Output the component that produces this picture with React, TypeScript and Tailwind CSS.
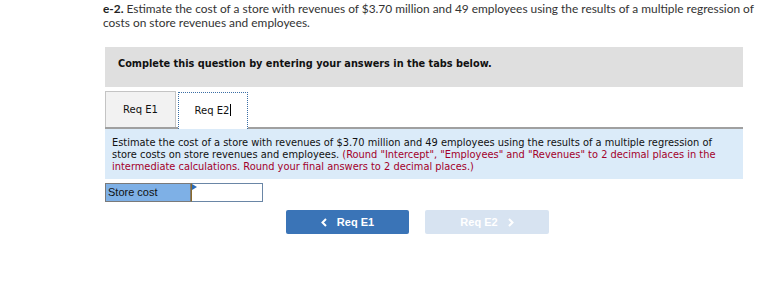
import React from 'react';

export default function App() {
  return (
    <div className="w-[758px] h-[282px] bg-white overflow-hidden relative">
      {/* Question text */}
      <div className="pl-[103px] pt-[2px] text-[11.9px] leading-[14px] text-[#333] font-['Lato',sans-serif] whitespace-nowrap">
        <b className="text-[#222]">e-2.</b> Estimate the cost of a store with revenues of $3.70 million and 49 employees using the results of a multiple regression of
        <br />
        costs on store revenues and employees.
      </div>

      <div className="ml-[105px] w-[638px] mt-[17px]">
        {/* Instructions banner */}
        <div className="h-[40px] bg-[#dfdfdf] flex items-center pl-[13px] pb-[5px] font-['DejaVu_Sans',sans-serif] text-[9.75px] font-bold text-[#111]">
          Complete this question by entering your answers in the tabs below.
        </div>

        {/* Tabs */}
        <div className="flex items-end gap-[2px] mt-[4px] font-['DejaVu_Sans',sans-serif] text-[10px] text-[#111]">
          <div className="w-[71px] h-[36px] bg-[#f2f2f2] border border-[#c4c4c4] border-b-0 flex items-center justify-center">
            Req E1
          </div>
          <div className="w-[70px] h-[37px] bg-white border border-dotted border-[#3a6ea5] border-b-0 flex items-center justify-center relative z-10 -mb-[2px] pb-[2px]">
            Req E2<span className="inline-block w-px h-[12px] bg-black ml-[1px]" />
          </div>
        </div>

        {/* Info box */}
        <div className="border-t-2 border-[#a0a0a0] bg-[#dbebf9] pl-[7px] pr-[6px] pt-[8px] pb-[8px] h-[52px] font-['DejaVu_Sans',sans-serif] text-[9.85px] leading-[12px] text-[#111]">
          Estimate the cost of a store with revenues of $3.70 million and 49 employees using the results of a multiple regression of store costs on store revenues and employees.{' '}
          <span className="text-[#a3002a]">
            (Round "Intercept", "Employees" and "Revenues" to 2 decimal places in the intermediate calculations. Round your final answers to 2 decimal places.)
          </span>
        </div>

        {/* Answer row */}
        <div className="flex mt-[4px] font-['Liberation_Sans',sans-serif] text-[11px]">
          <div className="w-[86px] h-[19px] bg-[#7eb0e6] border border-[#7a7a7a] flex items-center pl-[2px] text-[#111]">
            Store cost
          </div>
          <div className="w-[72px] h-[19px] bg-white border border-[#6a86a6] border-l-[#8a6a2a] relative">
            <span className="absolute left-0 top-0 w-0 h-0 border-t-[3px] border-b-[3px] border-l-[5px] border-t-transparent border-b-transparent border-l-[#2a6bb8]" />
          </div>
        </div>

        {/* Nav buttons */}
        <div className="flex gap-[16px] mt-[8px] ml-[181px] font-['Liberation_Sans',sans-serif] text-[11px] font-bold text-white">
          <div className="w-[123px] h-[24px] bg-[#3a74b7] rounded-[2px] flex items-center justify-center gap-[10px]">
            <svg width="6" height="9" viewBox="0 0 6 9"><path d="M5 1 L1.5 4.5 L5 8" stroke="white" strokeWidth="2" fill="none" /></svg>
            <span>Req E1</span>
          </div>
          <div className="w-[124px] h-[24px] bg-[#d7e3f1] rounded-[2px] flex items-center justify-center gap-[10px]">
            <span>Req E2</span>
            <svg width="6" height="9" viewBox="0 0 6 9"><path d="M1 1 L4.5 4.5 L1 8" stroke="white" strokeWidth="2" fill="none" /></svg>
          </div>
        </div>
      </div>
    </div>
  );
}
